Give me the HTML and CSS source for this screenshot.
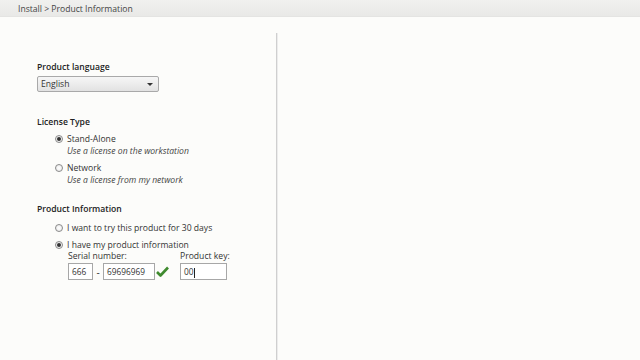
FILE: index.html
```html
<!DOCTYPE html>
<html>
<head>
<meta charset="utf-8">
<link rel="stylesheet" href="styles.css">
</head>
<body>
<div class="crumb">Install &gt; Product Information</div>
<div class="main">
  <div class="left">
    <div class="section">
      <div class="title">Product language</div>
      <div class="select"><span>English</span><span class="arrow"></span></div>
    </div>
    <div class="section lic">
      <div class="title">License Type</div>
      <div class="opts">
        <div class="opt"><span class="radio on"></span><div><div class="label">Stand-Alone</div><div class="desc">Use a license on the workstation</div></div></div>
        <div class="opt"><span class="radio"></span><div><div class="label">Network</div><div class="desc">Use a license from my network</div></div></div>
      </div>
    </div>
    <div class="section pinfo">
      <div class="title">Product Information</div>
      <div class="opts2">
        <div class="opt"><span class="radio"></span><div class="label">I want to try this product for 30 days</div></div>
        <div class="opt"><span class="radio on"></span><div class="label">I have my product information</div></div>
      </div>
      <div class="fields">
        <div class="field">
          <div class="flabel">Serial number:</div>
          <div class="row">
            <div class="box b1">666</div>
            <span class="dash">-</span>
            <div class="box b2">69696969</div>
            <svg class="check" width="13" height="11" viewBox="0 0 13 11"><path d="M1 6 L4.5 9.5 L12 1.5" fill="none" stroke="#3f8a2e" stroke-width="2.6" stroke-linejoin="round"/></svg>
          </div>
        </div>
        <div class="field">
          <div class="flabel">Product key:</div>
          <div class="row"><div class="box b3">00<span class="caret"></span></div></div>
        </div>
      </div>
    </div>
  </div>
  <div class="divider"></div>
  <div class="right"></div>
</div>
</body>
</html>
```
FILE: styles.css
```css
html, body { margin: 0; padding: 0; }
body {
  width: 640px; height: 360px; overflow: hidden;
  background: #fcfcfa;
  font-family: "Open Sans", "Noto Sans", sans-serif;
  font-size: 8.6px;
  color: #3a3a3a;
}
.crumb {
  height: 17px;
  background: linear-gradient(#f1f1ef, #e9e9e7);
  border-bottom: 1px solid #e4e4e2;
  box-sizing: border-box;
  padding-left: 18px;
  line-height: 18px;
  font-size: 8.6px;
  color: #444;
}
.main { display: flex; height: 343px; }
.left { width: 276px; padding-left: 37px; box-sizing: border-box; padding-top: 44px; }
.divider { width: 1px; background: #cfcfcf; margin-top: 16px; box-shadow: 1px 0 0 #ececec; }
.right { flex: 1; }
.title { font-weight: 600; color: #222; line-height: 12px; }
.select {
  margin-top: 3px;
  width: 122px; height: 16px; box-sizing: border-box;
  border: 1px solid #a9a9a9; border-radius: 2px;
  background: linear-gradient(#f6f6f6, #e2e2e2);
  display: flex; align-items: center; justify-content: space-between;
  padding: 0 5px 0 3px; color: #333;
}
.arrow { width: 0; height: 0; border-left: 3px solid transparent; border-right: 3px solid transparent; border-top: 3px solid #333; }
.lic { margin-top: 24px; }
.opts { margin-top: 5px; padding-left: 18px; display: flex; flex-direction: column; gap: 5px; }
.opt { display: flex; gap: 4px; align-items: flex-start; }
.label { line-height: 12px; color: #333; }
.desc { font-style: italic; line-height: 12px; color: #444; }
.radio {
  width: 8px; height: 8px; border-radius: 50%; box-sizing: border-box;
  border: 1px solid #8a8a8a; background: radial-gradient(#fff, #e6e6e6);
  margin-top: 2px; position: relative; flex: none;
}
.radio.on::after { content: ""; position: absolute; left: 1px; top: 1px; width: 4px; height: 4px; border-radius: 50%; background: #333; }
.pinfo { margin-top: 17px; }
.opts2 { margin-top: 7px; padding-left: 18px; display: flex; flex-direction: column; gap: 5px; }
.fields { display: flex; gap: 11px; padding-left: 31px; margin-top: -1px; }
.flabel { line-height: 12px; color: #333; }
.row { display: flex; align-items: center; margin-top: 1px; }
.box {
  height: 17px; box-sizing: border-box; border: 1px solid #a7a7a7; background: #fff;
  line-height: 15px; padding-left: 3px; color: #333; font-size: 8.3px;
}
.b1 { width: 25px; }
.b2 { width: 52px; }
.b3 { width: 47px; padding-left: 3px; }
.dash { width: 10px; text-align: center; font-size: 10px; line-height: 12px; color: #333; }
.check { margin-left: 1px; }
.caret { display: inline-block; width: 1px; height: 10px; background: #222; vertical-align: middle; }
```
